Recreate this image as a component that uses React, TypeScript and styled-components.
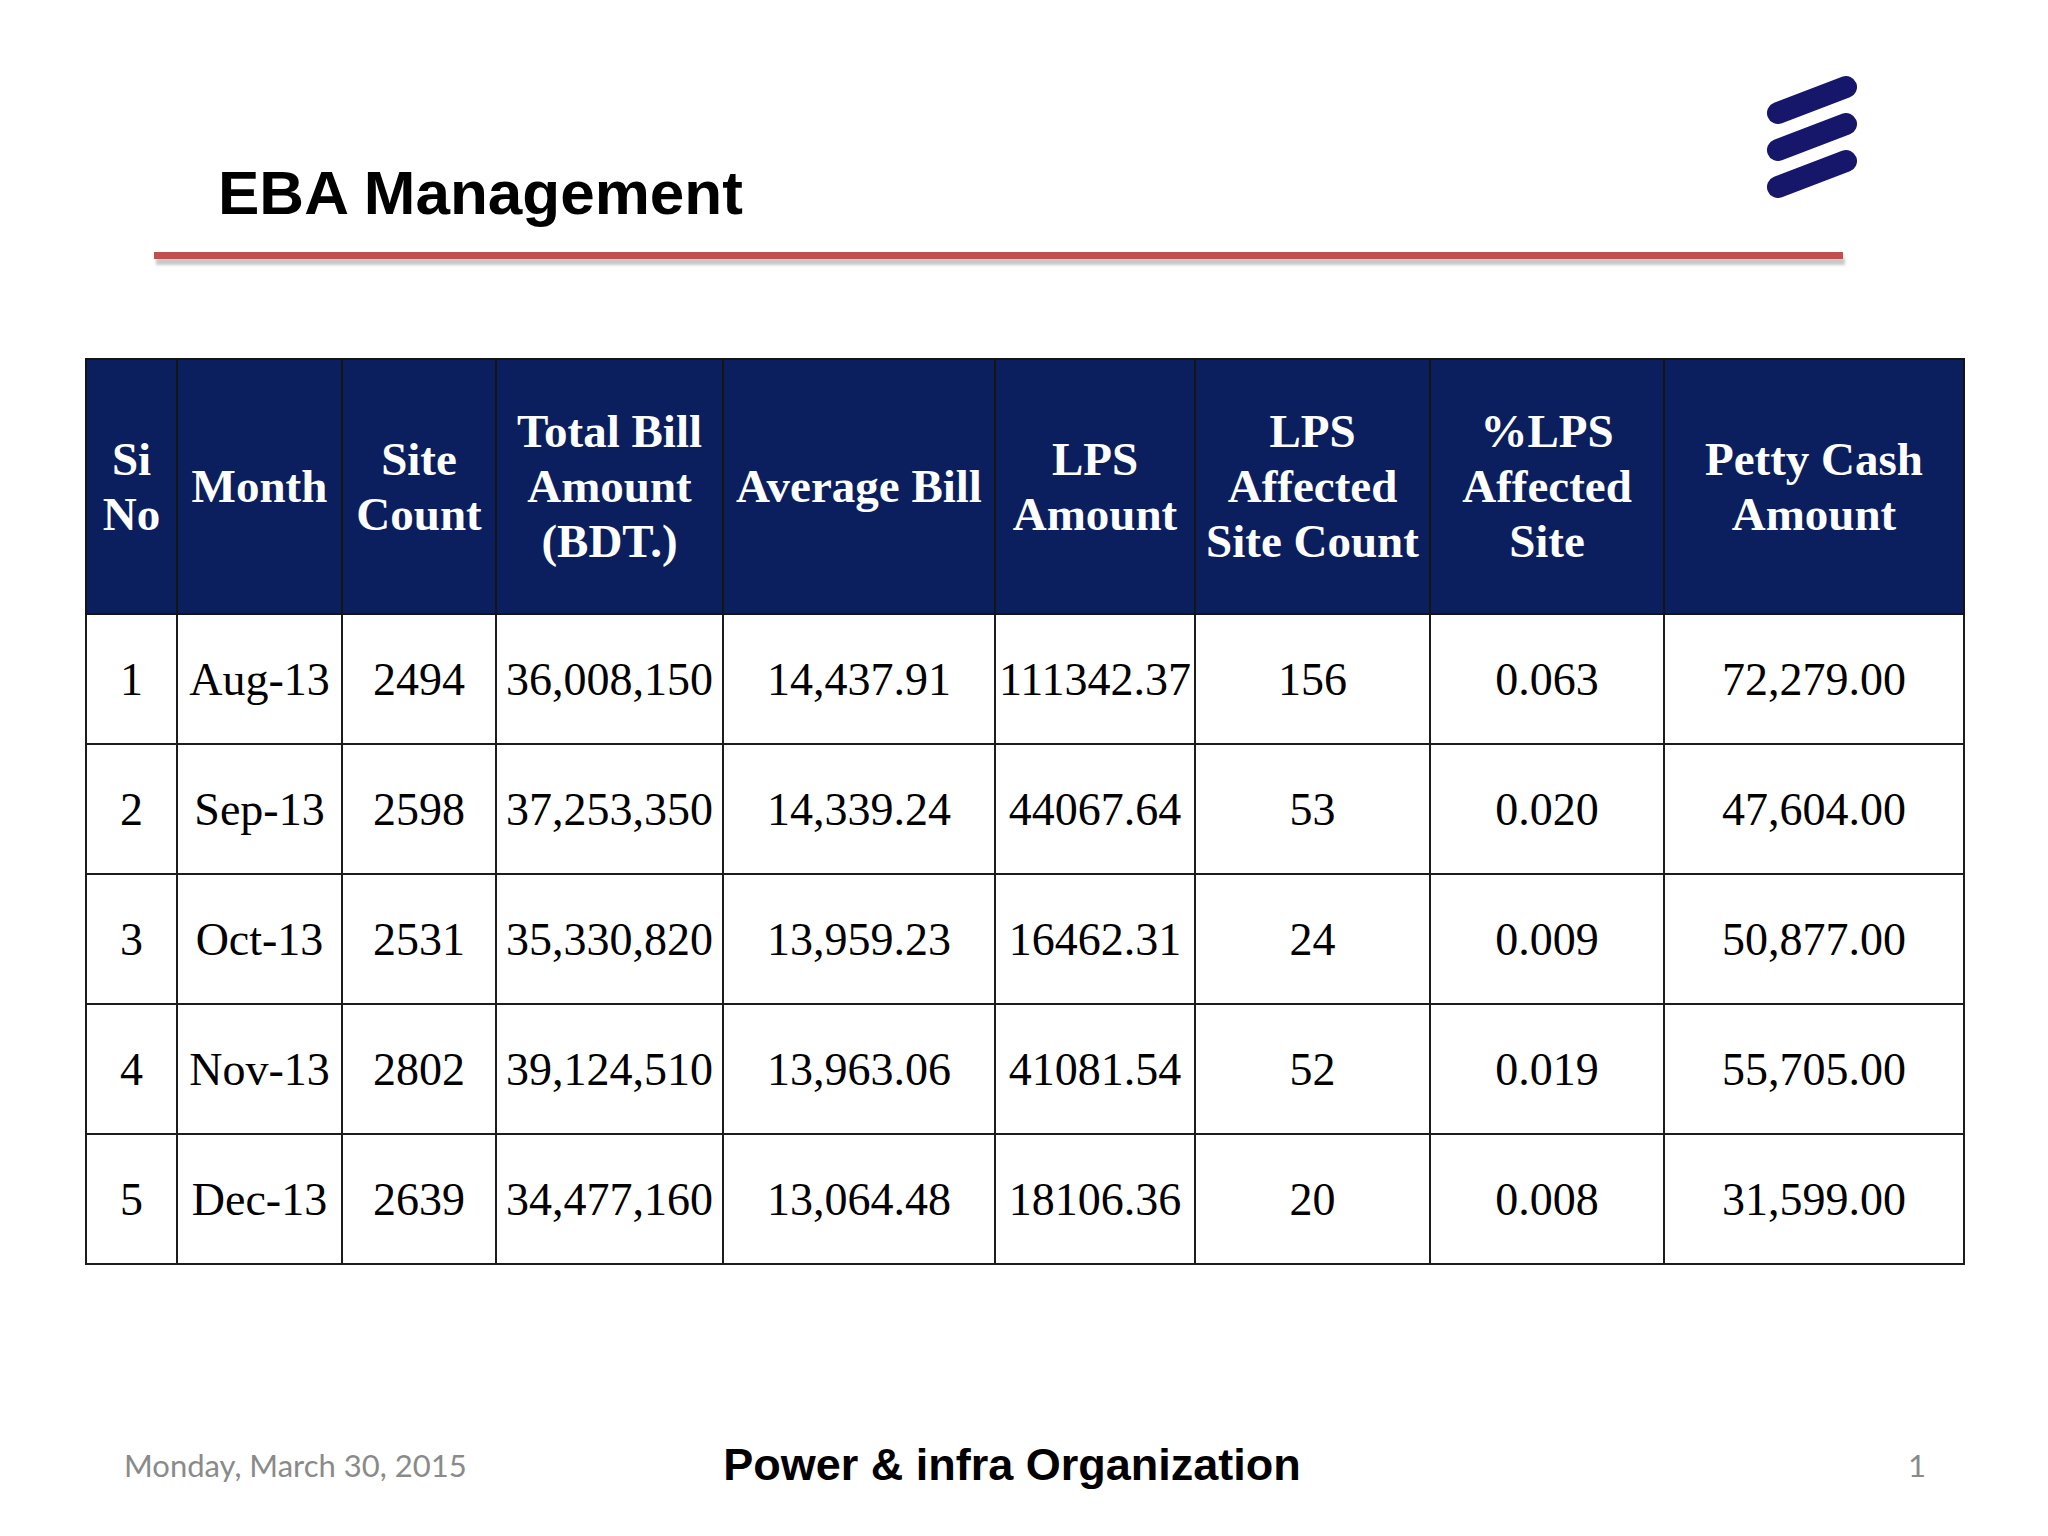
import React from "react";
import styled, { createGlobalStyle } from "styled-components";

interface IRow {
  no: number;
  month: string;
  sites: string;
  total: string;
  average: string;
  lps: string;
  affected: string;
  percent: string;
  petty: string;
}

const rows: IRow[] = [
  { no: 1, month: "Aug-13", sites: "2494", total: "36,008,150", average: "14,437.91", lps: "111342.37", affected: "156", percent: "0.063", petty: "72,279.00" },
  { no: 2, month: "Sep-13", sites: "2598", total: "37,253,350", average: "14,339.24", lps: "44067.64", affected: "53", percent: "0.020", petty: "47,604.00" },
  { no: 3, month: "Oct-13", sites: "2531", total: "35,330,820", average: "13,959.23", lps: "16462.31", affected: "24", percent: "0.009", petty: "50,877.00" },
  { no: 4, month: "Nov-13", sites: "2802", total: "39,124,510", average: "13,963.06", lps: "41081.54", affected: "52", percent: "0.019", petty: "55,705.00" },
  { no: 5, month: "Dec-13", sites: "2639", total: "34,477,160", average: "13,064.48", lps: "18106.36", affected: "20", percent: "0.008", petty: "31,599.00" },
];

const columns = [91, 165, 154, 227, 272, 200, 235, 234, 300];

const headers = [
  "Si No",
  "Month",
  "Site Count",
  "Total Bill Amount (BDT.)",
  "Average Bill",
  "LPS Amount",
  "LPS Affected Site Count",
  "%LPS Affected Site",
  "Petty Cash Amount",
];

const GlobalStyle = createGlobalStyle`
  html, body {
    margin: 0;
    padding: 0;
    background: #ffffff;
  }
`;

const App: React.FC = () => {
  return (
    <>
      <GlobalStyle />
      <Slide>
        <Header>
          <Title>EBA Management</Title>
          <Logo width="104" height="135" viewBox="0 0 104 135">
            <line x1="18" y1="43" x2="86" y2="17" />
            <line x1="18" y1="80" x2="86" y2="54" />
            <line x1="18" y1="117" x2="86" y2="91" />
          </Logo>
        </Header>
        <Rule />
        <Table>
          <colgroup>
            {columns.map((w, i) => (
              <col key={i} style={{ width: w }} />
            ))}
          </colgroup>
          <thead>
            <tr>
              {headers.map((h) => (
                <HeadCell key={h}>{h}</HeadCell>
              ))}
            </tr>
          </thead>
          <tbody>
            {rows.map((r) => (
              <BodyRow key={r.no}>
                <Cell>{r.no}</Cell>
                <Cell>{r.month}</Cell>
                <Cell>{r.sites}</Cell>
                <Cell>{r.total}</Cell>
                <Cell>{r.average}</Cell>
                <Cell>{r.lps}</Cell>
                <Cell>{r.affected}</Cell>
                <Cell>{r.percent}</Cell>
                <Cell>{r.petty}</Cell>
              </BodyRow>
            ))}
          </tbody>
        </Table>
        <Footer>
          <DateText>Monday, March 30, 2015</DateText>
          <OrgText>Power &amp; infra Organization</OrgText>
          <PageNo>1</PageNo>
        </Footer>
      </Slide>
    </>
  );
};

const Slide = styled.div`
  width: 2048px;
  height: 1536px;
  display: flex;
  flex-direction: column;
  background: #ffffff;
  overflow: hidden;
`;

const Header = styled.div`
  display: flex;
  justify-content: space-between;
  align-items: flex-start;
  margin: 70px 0 0 218px;
  width: 1646px;
`;

const Title = styled.h1`
  margin: 92px 0 0 0;
  font-family: "Liberation Sans", Arial, sans-serif;
  font-weight: bold;
  font-size: 62px;
  line-height: 1;
  color: #000000;
`;

const Logo = styled.svg`
  display: block;
  flex-shrink: 0;

  line {
    stroke: #16166b;
    stroke-width: 22;
    stroke-linecap: round;
  }
`;

const Rule = styled.div`
  margin: 28px 0 0 154px;
  width: 1689px;
  height: 7px;
  background: #c0504d;
  box-shadow: 2px 6px 3px rgba(0, 0, 0, 0.22);
`;

const Table = styled.table`
  margin: 99px 0 0 85px;
  width: 1878px;
  table-layout: fixed;
  border-collapse: collapse;
  font-family: "Liberation Serif", "Times New Roman", serif;
`;

const HeadCell = styled.th`
  height: 253px;
  padding: 0 4px;
  background: #0b1f5e;
  color: #ffffff;
  font-weight: bold;
  font-size: 47px;
  line-height: 55px;
  text-align: center;
  vertical-align: middle;
  border: 2px solid #141414;
`;

const BodyRow = styled.tr`
  height: 130px;
`;

const Cell = styled.td`
  padding: 0;
  color: #000000;
  font-size: 46px;
  text-align: center;
  vertical-align: middle;
  white-space: nowrap;
  border: 2px solid #1c1c1c;
`;

const Footer = styled.div`
  display: grid;
  grid-template-columns: 598px 580px 1fr;
  align-items: center;
  margin: 177px 0 0 124px;
  width: 1802px;
`;

const DateText = styled.span`
  font-family: Lato, "Liberation Sans", sans-serif;
  font-size: 31px;
  color: #8a8a8a;
`;

const OrgText = styled.span`
  font-family: "Liberation Sans", Arial, sans-serif;
  font-weight: bold;
  font-size: 45px;
  line-height: 1;
  color: #000000;
  white-space: nowrap;
  text-align: center;
`;

const PageNo = styled.span`
  font-family: Lato, "Liberation Sans", sans-serif;
  font-size: 31px;
  color: #8a8a8a;
  text-align: right;
`;

export default App;
